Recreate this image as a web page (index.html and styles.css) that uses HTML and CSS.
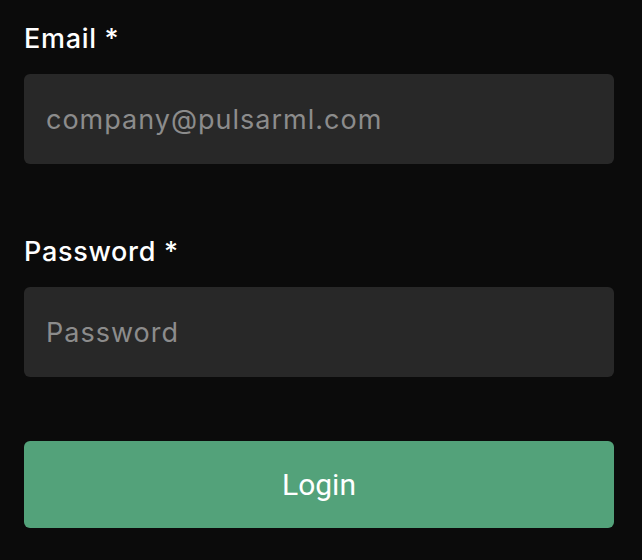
FILE: index.html
```html
<!DOCTYPE html>
<html lang="en">
<head>
<meta charset="utf-8">
<title>Login</title>
<link rel="stylesheet" href="styles.css">
</head>
<body>
<form class="login-form">
  <div class="field">
    <label class="field-label" for="email">Email *</label>
    <input class="field-input" id="email" type="email" placeholder="company@pulsarml.com">
  </div>
  <div class="field field-password">
    <label class="field-label" for="password">Password *</label>
    <input class="field-input" id="password" type="password" placeholder="Password">
  </div>
  <button class="login-button" type="button">Login</button>
</form>
</body>
</html>
```

FILE: styles.css
```css
html, body {
  margin: 0;
  padding: 0;
  background: #0b0b0b;
}

body {
  font-family: Inter, "Noto Sans", sans-serif;
  color: #ffffff;
}

.login-form {
  display: flex;
  flex-direction: column;
  padding: 23px 28px 0 24px;
}

.field {
  display: flex;
  flex-direction: column;
  gap: 19px;
}

.field-password {
  margin-top: 72px;
}

.field-label {
  font-size: 27px;
  line-height: 32px;
  font-weight: 500;
  letter-spacing: 0.7px;
  color: #ffffff;
}

.field-input {
  box-sizing: border-box;
  height: 90px;
  width: 100%;
  margin: 0;
  padding: 0 22px;
  border: none;
  border-radius: 6px;
  background: #282828;
  color: #ffffff;
  font-family: Inter, "Noto Sans", sans-serif;
  font-size: 27px;
  letter-spacing: 1px;
  outline: none;
}

.field-input::placeholder {
  color: #8c8c8c;
  opacity: 1;
}

.login-button {
  margin-top: 64px;
  height: 87px;
  width: 100%;
  border: none;
  border-radius: 6px;
  background: #53a27a;
  color: #ffffff;
  font-family: Roboto, "Noto Sans", sans-serif;
  font-size: 30px;
  cursor: pointer;
}
```
